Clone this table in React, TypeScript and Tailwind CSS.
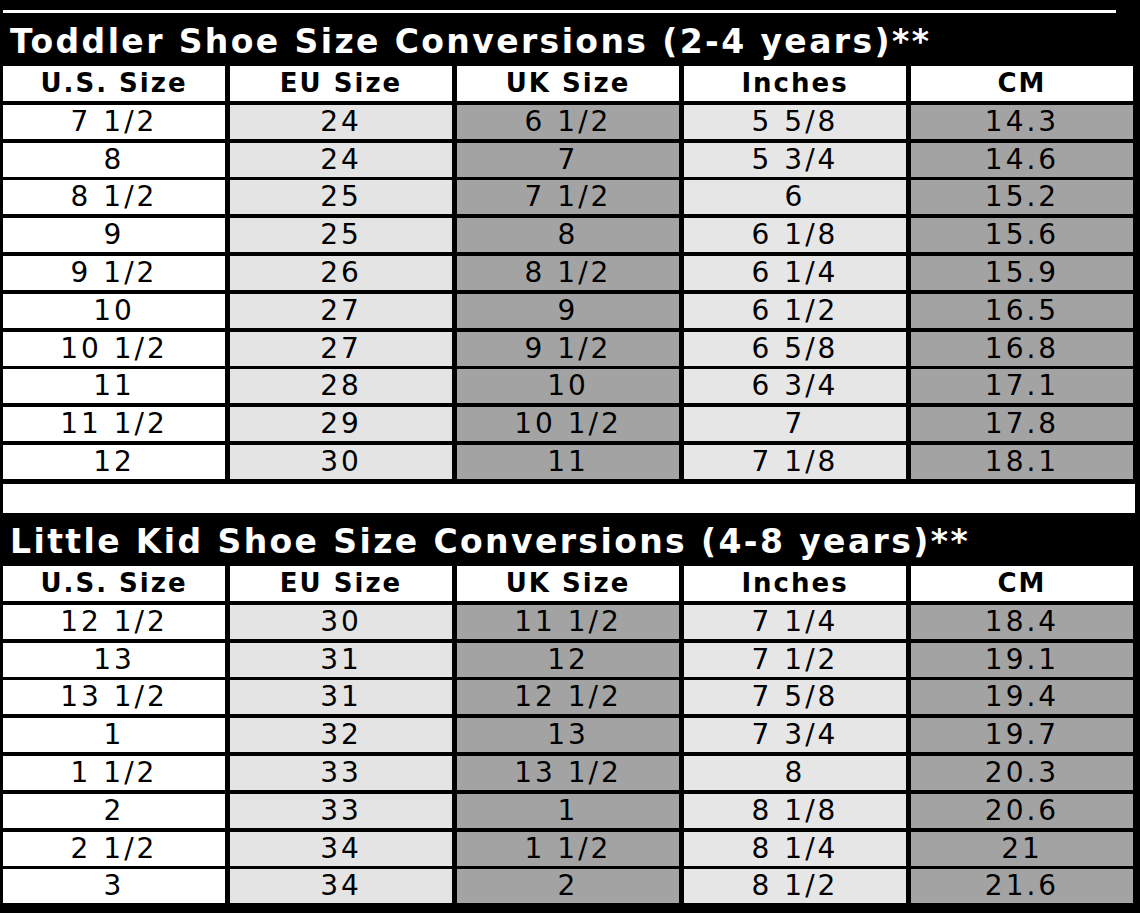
const toddler: string[][] = [
  ['7 1/2', '24', '6 1/2', '5 5/8', '14.3'],
  ['8', '24', '7', '5 3/4', '14.6'],
  ['8 1/2', '25', '7 1/2', '6', '15.2'],
  ['9', '25', '8', '6 1/8', '15.6'],
  ['9 1/2', '26', '8 1/2', '6 1/4', '15.9'],
  ['10', '27', '9', '6 1/2', '16.5'],
  ['10 1/2', '27', '9 1/2', '6 5/8', '16.8'],
  ['11', '28', '10', '6 3/4', '17.1'],
  ['11 1/2', '29', '10 1/2', '7', '17.8'],
  ['12', '30', '11', '7 1/8', '18.1'],
];

const littleKid: string[][] = [
  ['12 1/2', '30', '11 1/2', '7 1/4', '18.4'],
  ['13', '31', '12', '7 1/2', '19.1'],
  ['13 1/2', '31', '12 1/2', '7 5/8', '19.4'],
  ['1', '32', '13', '7 3/4', '19.7'],
  ['1 1/2', '33', '13 1/2', '8', '20.3'],
  ['2', '33', '1', '8 1/8', '20.6'],
  ['2 1/2', '34', '1 1/2', '8 1/4', '21'],
  ['3', '34', '2', '8 1/2', '21.6'],
];

const headers = ['U.S. Size', 'EU Size', 'UK Size', 'Inches', 'CM'];

const cellBg = ['bg-white', 'bg-[#e4e4e4]', 'bg-[#a3a3a3]', 'bg-[#e6e6e6]', 'bg-[#a3a3a3]'];

const SizeTable = ({ title, rows }: { title: string; rows: string[][] }) => {
  return (
    <div>
      {/* Title band */}
      <div className="h-[53px] flex items-center pl-[7px] pt-[4px] text-white font-bold text-[33px] tracking-[2.4px] leading-none">
        {title}
      </div>

      {/* Header row */}
      <div className="grid grid-cols-[repeat(5,222px)] gap-x-[5px]">
        {headers.map((h) => (
          <div
            key={h}
            className="h-[35px] bg-white flex items-center justify-center font-bold text-[26px] tracking-[2px] text-black"
          >
            {h}
          </div>
        ))}
      </div>

      {/* Data rows */}
      {rows.map((row, i) => (
        <div key={i} className="grid grid-cols-[repeat(5,222px)] gap-x-[5px] mt-[3.8px]">
          {row.map((val, j) => (
            <div
              key={j}
              className={`h-[34px] ${cellBg[j]} flex items-center justify-center text-[28px] tracking-[3px] text-black`}
            >
              {val}
            </div>
          ))}
        </div>
      ))}
    </div>
  );
};

const App = () => {
  return (
    <div className="w-[1140px] h-[913px] bg-black overflow-hidden font-['DejaVu_Sans',Verdana,sans-serif] pl-[3px] pt-[10px]">
      <div className="h-[3px] w-[1113px] bg-white" />

      <SizeTable title="Toddler Shoe Size Conversions (2-4 years)**" rows={toddler} />

      {/* White spacer between the two tables */}
      <div className="h-[29px] w-[1132px] bg-white mt-[5px]" />

      <SizeTable title="Little Kid Shoe Size Conversions (4-8 years)**" rows={littleKid} />
    </div>
  );
};

export default App;
